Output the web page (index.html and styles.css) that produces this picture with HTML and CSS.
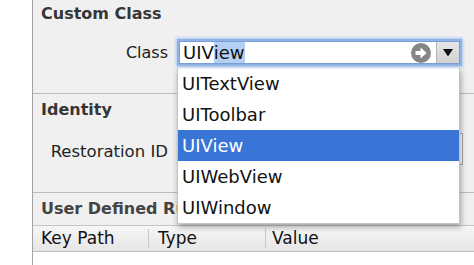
FILE: index.html
```html
<!DOCTYPE html>
<html lang="en">
<head>
    <meta charset="UTF-8">
    <title>Identity Inspector</title>
    <link rel="stylesheet" href="styles.css">
</head>
<body>
    <div class="page">
        <div class="gutter"></div>

        <div class="inspector">
            <div class="section custom-class">
                <h2>Custom Class</h2>
                <div class="row">
                    <label class="row-label">Class</label>
                    <div class="combo">
                        <div class="combo-text">UIV<span class="completion">iew</span></div>
                        <svg class="combo-go" width="20" height="20" viewBox="0 0 20 20">
                            <circle cx="10" cy="10" r="10" fill="#858585"/>
                            <path d="M4.5 8 H9.5 V4.6 L15.8 10 L9.5 15.4 V12 H4.5 Z" fill="#fff"/>
                        </svg>
                        <div class="combo-btn">
                            <svg width="10" height="8" viewBox="0 0 10 8">
                                <polygon points="0,0 10,0 5,7.5" fill="#111"/>
                            </svg>
                        </div>
                    </div>
                </div>
            </div>

            <div class="section identity">
                <h2>Identity</h2>
                <div class="row">
                    <label class="row-label restoration-label">Restoration ID</label>
                    <div class="text-field"></div>
                </div>
            </div>

            <div class="section runtime">
                <h2>User Defined Runtime Attributes</h2>
            </div>
            <div class="table-head">
                <div class="col col-key"><span>Key Path</span></div>
                <div class="col col-type"><span>Type</span></div>
                <div class="col col-value"><span>Value</span></div>
            </div>
            <div class="table-body"></div>

            <ul class="class-menu">
                <li>UITextView</li>
                <li>UIToolbar</li>
                <li class="selected">UIView</li>
                <li>UIWebView</li>
                <li>UIWindow</li>
            </ul>
        </div>
    </div>
</body>
</html>
```

FILE: styles.css
```css
body {
    margin: 0;
    background: #fff;
    color: #1e1e1e;
    font-family: "DejaVu Sans", "Noto Sans", sans-serif;
    overflow: hidden;
}

.page {
    display: flex;
    height: 265px;
}

.gutter {
    width: 32px;
    background: #fff;
}

.inspector {
    flex: 1;
    position: relative;
    border-left: 1px solid #a4a4a4;
    background: #f0f0f0;
}

.section {
    box-sizing: border-box;
    border-bottom: 1px solid #bcbcbc;
}

h2 {
    margin: 0;
    padding-left: 8px;
    font-size: 16px;
    font-weight: bold;
    line-height: 26px;
    color: #363636;
}

.custom-class {
    height: 94px;
    padding-top: 1px;
}

.identity {
    height: 99px;
    padding-top: 3px;
}

.runtime {
    border-bottom: none;
}

/* the popup covers the rest of this heading */
.runtime h2 {
    width: 136px;
    overflow: hidden;
    line-height: 32px;
    color: #444;
    white-space: nowrap;
}

.row {
    display: flex;
    align-items: flex-start;
}

.custom-class .row {
    margin-top: 14px;
}

.identity .row {
    margin-top: 10px;
}

.row-label {
    width: 135px;
    text-align: right;
    font-size: 16px;
    line-height: 23px;
    color: #222;
}

.restoration-label {
    line-height: 32px;
    padding-top: 3px;
    font-size: 16.5px;
}

/* combo box with focus ring */
.combo {
    box-sizing: border-box;
    margin-left: 11px;
    width: 281px;
    height: 23px;
    display: flex;
    align-items: center;
    background: #fff;
    border: 1px solid #7b9ed2;
    box-shadow: 0 0 0 2px #8fb3e6, 0 0 3px 3px #a9c6ee;
    position: relative;
    z-index: 2;
}

.combo-text {
    flex: 1;
    padding-left: 3px;
    font-size: 18px;
    line-height: 21px;
    height: 21px;
    color: #111;
}

.completion {
    display: inline-block;
    background: #b3cff3;
    height: 21px;
}

.combo-go {
    margin-right: 5px;
}

.combo-btn {
    width: 22px;
    height: 21px;
    display: flex;
    justify-content: center;
    align-items: center;
    border-left: 1px solid #b3b3b3;
    background: linear-gradient(#e6e6e6, #d2d2d2);
}

.text-field {
    box-sizing: border-box;
    margin-left: 10px;
    width: 285px;
    height: 32px;
    background: #fff;
    border: 1px solid #a8a8a8;
}

/* runtime attributes table */
.table-head {
    box-sizing: border-box;
    height: 27px;
    display: grid;
    grid-template-columns: 115px 117px 1fr;
    align-items: center;
    border-top: 1px solid #c6c6c6;
    border-bottom: 1px solid #bdbdbd;
    background: linear-gradient(#f6f6f6, #e6e6e6);
    font-size: 17px;
    color: #111;
}

.col span {
    display: block;
    line-height: 19px;
}

.col-key {
    padding-left: 8px;
}

.col-type span,
.col-value span {
    border-left: 1px solid #c8c8c8;
}

.col-type span {
    padding-left: 9px;
}

.col-value span {
    padding-left: 6px;
}

.table-body {
    height: 20px;
    background: #fff;
}

/* popup list of matching classes */
.class-menu {
    position: absolute;
    left: 144px;
    top: 68px;
    width: 283px;
    box-sizing: border-box;
    margin: 0;
    padding: 0;
    list-style: none;
    background: #fff;
    border: 1px solid #c4c4c4;
    border-top: none;
    box-shadow: 1px 3px 6px #00000055;
    z-index: 1;
}

.class-menu li {
    height: 31px;
    line-height: 31px;
    padding-left: 4px;
    font-size: 18px;
    color: #111;
}

.class-menu li.selected {
    background: #3875d7;
    color: #fff;
}

.runtime h2 {
    width: 144px;
}
```
